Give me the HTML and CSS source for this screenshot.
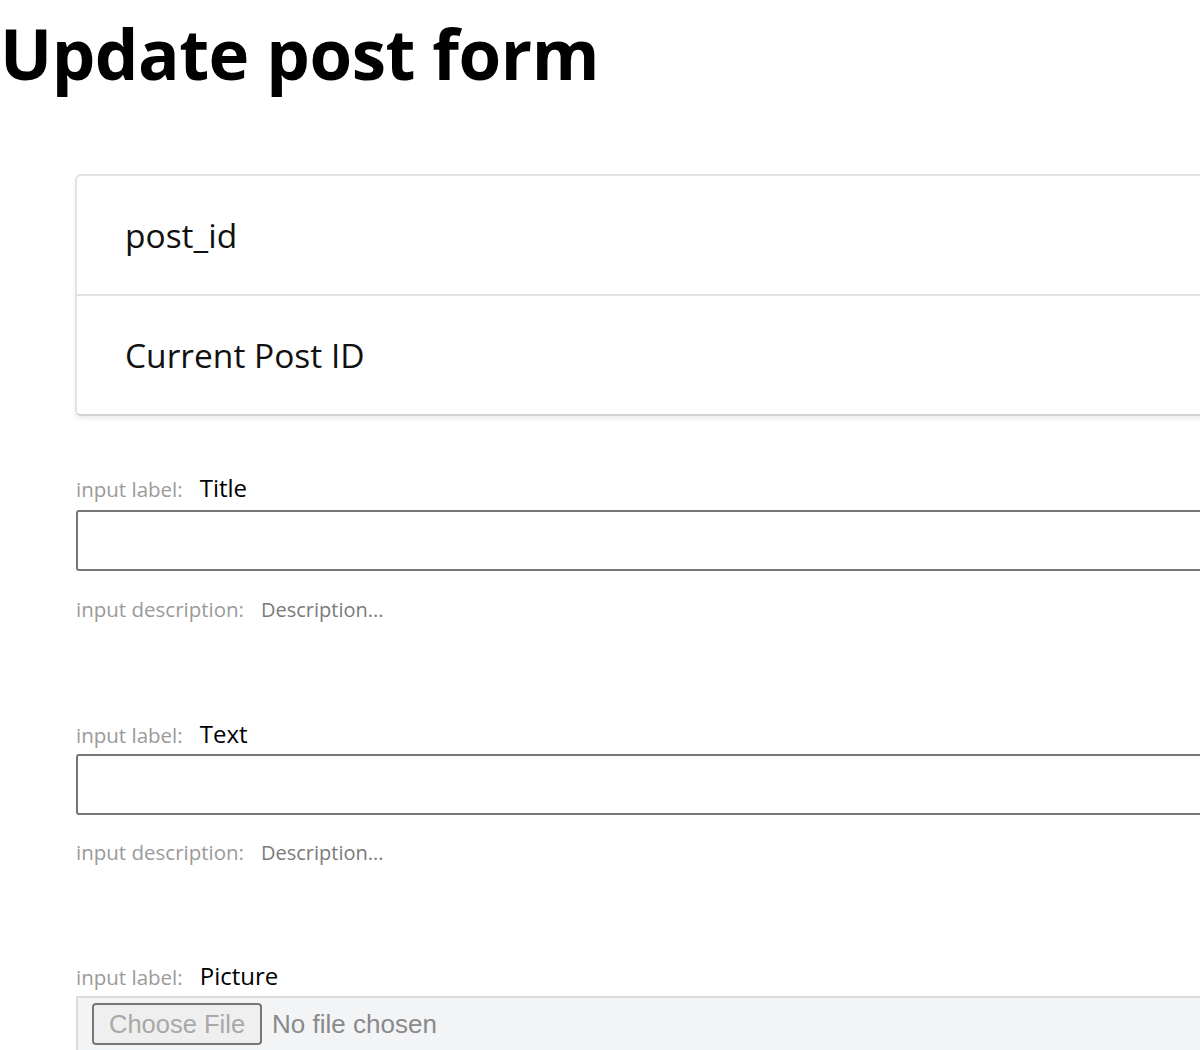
FILE: index.html
```html
<!DOCTYPE html>
<html lang="en">
<head>
<meta charset="utf-8">
<title>Update post form</title>
<link rel="stylesheet" href="styles.css">
</head>
<body>
<h1 class="page-title">Update post form</h1>
<div class="form-wrap">
  <div class="card">
    <div class="card-row">post_id</div>
    <div class="card-row card-row-divided">Current Post ID</div>
  </div>

  <div class="field">
    <div class="field-label"><span class="meta">input label:</span><span class="label-text">Title</span></div>
    <input class="text-input" type="text">
    <div class="field-desc"><span class="meta">input description:</span><span class="desc-text">Description...</span></div>
  </div>

  <div class="field field-second">
    <div class="field-label"><span class="meta">input label:</span><span class="label-text">Text</span></div>
    <input class="text-input" type="text">
    <div class="field-desc"><span class="meta">input description:</span><span class="desc-text">Description...</span></div>
  </div>

  <div class="field field-file">
    <div class="field-label"><span class="meta">input label:</span><span class="label-text">Picture</span></div>
    <div class="file-box"><span class="file-btn">Choose File</span><span class="file-name">No file chosen</span></div>
  </div>
</div>
</body>
</html>
```

FILE: styles.css
```css
html, body {
  margin: 0;
  padding: 0;
  overflow: hidden;
  background: #ffffff;
}
body {
  font-family: "Open Sans", "Noto Sans", "DejaVu Sans", sans-serif;
  color: #000;
}
.page-title {
  margin: 0;
  padding-top: 8px;
  font-size: 69px;
  line-height: 90px;
  font-weight: 700;
  letter-spacing: -0.5px;
}
.form-wrap {
  margin-top: 76px;
  margin-left: 75px;
  width: 1400px;
}
.card {
  border: 2px solid #e2e2e2;
  border-bottom-color: #d2d2d2;
  border-radius: 6px;
  box-shadow: 0 3px 4px rgba(0, 0, 0, 0.07);
  background: #fff;
}
.card-row {
  height: 118px;
  display: flex;
  align-items: center;
  padding-left: 48px;
  font-size: 33.5px;
  color: #111;
}
.card-row-divided {
  border-top: 2px solid #e2e2e2;
}
.field {
  margin-top: 56px;
  margin-left: 1px;
}
.field + .field {
  margin-top: 93px;
}
.field + .field-file {
  margin-top: 92px;
}
.field-label, .field-desc {
  display: flex;
  align-items: baseline;
  height: 32px;
  line-height: 32px;
}
.meta {
  font-size: 20.5px;
  color: #9a9a9a;
  margin-right: 17px;
}
.label-text {
  font-size: 24px;
  color: #000;
}
.desc-text {
  font-size: 20px;
  color: #7a7a7a;
}
.text-input {
  display: block;
  box-sizing: border-box;
  width: 100%;
  height: 61px;
  margin: 6px 0 0 0;
  border: 2px solid #767676;
  border-radius: 3px;
  padding: 0 12px;
  background: #fff;
  font: inherit;
}
.field-second .text-input {
  margin-top: 4px;
}
.field-desc {
  margin-top: 22px;
}
.field-second .field-desc {
  margin-top: 21px;
}
.file-box {
  margin-top: 4px;
  box-sizing: border-box;
  height: 60px;
  border: 2px solid #dcdcdc;
  border-right: none;
  background: #f3f4f6;
  display: flex;
  align-items: flex-start;
  padding: 5px 0 0 14px;
  font-family: "Liberation Sans", Arial, sans-serif;
}
.file-btn {
  box-sizing: border-box;
  height: 42px;
  padding: 0 15px;
  display: flex;
  align-items: center;
  border: 2px solid #777;
  border-radius: 4px;
  background: #efefef;
  color: #a8a8a8;
  font-size: 25.5px;
}
.file-name {
  height: 42px;
  display: flex;
  align-items: center;
  margin-left: 10px;
  font-size: 26px;
  color: #8a8a8a;
}
```
